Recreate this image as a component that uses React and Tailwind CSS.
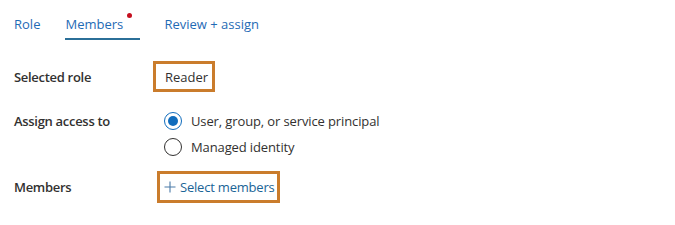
import React from 'react';

const Radio = ({ checked, label }) => {
  return (
    <div className="flex items-center h-[26px]">
      <div
        className={
          'w-[18px] h-[18px] rounded-full flex items-center justify-center border ' +
          (checked ? 'border-[#0f6cbd]' : 'border-[#323130]')
        }
      >
        {checked && <div className="w-[10px] h-[10px] rounded-full bg-[#0f6cbd]"></div>}
      </div>
      <span className="ml-[9px] tracking-[-0.12px] text-[#323130]">{label}</span>
    </div>
  );
};

const App = () => {
  return (
    <div className="w-[675px] h-[225px] bg-white font-['Open_Sans',sans-serif] text-[13px] leading-[20px] overflow-hidden">
      <nav className="flex items-start pl-[14px] pt-[14px]">
        <div className="h-[26px] text-[#1f6bb5]">Role</div>
        <div className="relative ml-[25px] h-[26px] w-[75px] border-b-2 border-b-[#2b6f98] text-[#1f6bb5]">
          Members
          <span className="absolute left-[62px] top-[-1px] w-[5px] h-[5px] rounded-full bg-[#c50f1f]"></span>
        </div>
        <div className="ml-[24px] h-[26px] text-[#1f6bb5]">Review + assign</div>
      </nav>

      <div className="grid grid-cols-[139px_1fr] pl-[14px] mt-[21px]">
        <div className="flex items-center h-[31px] font-semibold tracking-[-0.3px] text-[#323130]">Selected role</div>
        <div className="flex">
          <div className="flex items-center h-[31px] border-[3px] border-[#ca7c2c] pl-[9px] pr-[4px] text-[#323130]">
            Reader
          </div>
        </div>

        <div className="mt-[16px] h-[26px] flex items-center font-semibold tracking-[-0.3px] text-[#323130]">Assign access to</div>
        <div className="mt-[16px] ml-[11px] flex flex-col">
          <Radio checked label="User, group, or service principal" />
          <Radio label="Managed identity" />
        </div>

        <div className="mt-[11px] h-[32px] flex items-center font-semibold tracking-[-0.3px] text-[#323130]">Members</div>
        <div className="mt-[11px] flex">
          <div className="ml-[4px] h-[32px] flex items-center border-[3px] border-[#ca7c2c] pl-[4px] pr-[2px] tracking-[-0.2px] text-[#1a6496]">
            <svg width="12" height="12" viewBox="0 0 12 12" className="mr-[4px]">
              <path d="M6 0.5V11.5M0.5 6H11.5" stroke="#4a7aa8" strokeWidth="1.1" fill="none" />
            </svg>
            Select members
          </div>
        </div>
      </div>
    </div>
  );
};

export default App;
